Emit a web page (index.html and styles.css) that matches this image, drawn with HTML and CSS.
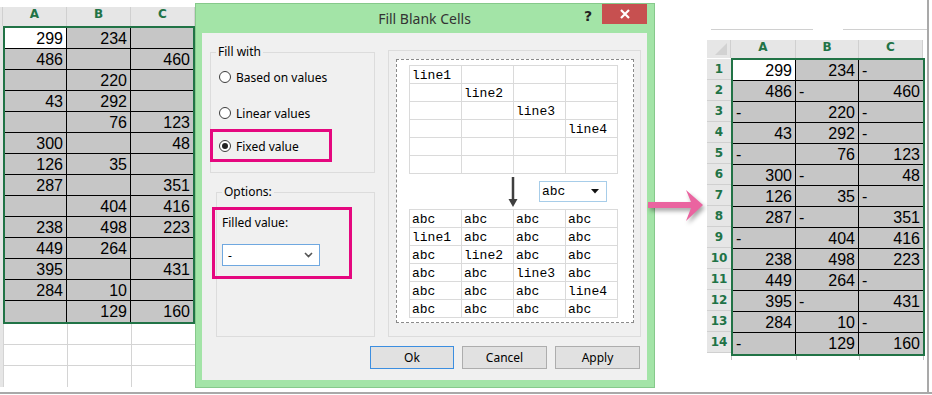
FILE: index.html
```html
<!DOCTYPE html>
<html lang="en">
<head>
    <meta charset="UTF-8">
    <title>Fill Blank Cells</title>
    <link rel="stylesheet" href="styles.css">
</head>
<body>
    <div class="page">
        <!-- source sheet -->
        <div class="sheet-left">
            <div class="xl-head l-head">
                <div class="ch"></div><div class="ch">A</div><div class="ch">B</div><div class="ch">C</div>
            </div>
            <div class="l-body">
                <div class="slice"></div>
                <div class="sel l-sel" id="leftSel"></div>
            </div>
            <div class="l-empty">
                <div class="slice"></div>
                <div class="empty-grid">
                    <span></span><span></span><span></span>
                    <span></span><span></span><span></span>
                    <span></span><span></span><span></span>
                </div>
            </div>
        </div>

        <!-- dialog -->
        <div class="dialog">
            <div class="titlebar">
                <div class="tb-side"></div>
                <div class="title">Fill Blank Cells</div>
                <div class="tb-side">
                    <span class="help">?</span>
                    <span class="close">
                        <svg width="12" height="12" viewBox="0 0 12 12"><path d="M2 2 L10 10 M10 2 L2 10" stroke="#fff" stroke-width="2.2"/></svg>
                    </span>
                </div>
            </div>
            <div class="dlg-body">
                <div class="dlg-main">
                    <div class="dlg-left">
                        <fieldset class="group fill-with">
                            <legend>Fill with</legend>
                            <div class="radio-row"><span class="radio"></span>Based on values</div>
                            <div class="radio-row"><span class="radio"></span>Linear values</div>
                            <div class="hl hl-radio">
                                <div class="radio-row"><span class="radio on"></span>Fixed value</div>
                            </div>
                        </fieldset>
                        <fieldset class="group options">
                            <legend>Options:</legend>
                            <div class="hl hl-value">
                                <div class="lbl">Filled value:</div>
                                <div class="combo">
                                    <span>-</span>
                                    <svg width="9" height="6" viewBox="0 0 9 6"><path d="M1 1 L4.5 4.5 L8 1" fill="none" stroke="#555" stroke-width="1.6"/></svg>
                                </div>
                            </div>
                        </fieldset>
                    </div>
                    <div class="preview">
                        <div class="preview-inner">
                            <div class="pgrid" id="gridBefore"></div>
                            <div class="arrow-row">
                                <svg width="10" height="35" viewBox="0 0 10 35"><line x1="5" y1="3" x2="5" y2="27" stroke="#3f3f3f" stroke-width="2.5"/><path d="M0.5 25 L9.5 25 L5 33 Z" fill="#3f3f3f"/></svg>
                                <div class="mini-combo">
                                    <span>abc</span>
                                    <svg width="8" height="5" viewBox="0 0 8 5"><path d="M0 0 H8 L4 4.5 Z" fill="#111"/></svg>
                                </div>
                            </div>
                            <div class="pgrid" id="gridAfter"></div>
                        </div>
                    </div>
                </div>
                <div class="buttons">
                    <button class="btn ok">Ok</button>
                    <button class="btn">Cancel</button>
                    <button class="btn">Apply</button>
                </div>
            </div>
        </div>

        <div class="gap"></div>

        <!-- result sheet -->
        <div class="sheet-right">
            <div class="fx-line"><span class="seg1"></span><span class="seg2"></span></div>
            <div class="xl-head r-head">
                <div class="corner">
                    <svg width="12" height="12" viewBox="0 0 12 12"><path d="M12 0 V12 H0 Z" fill="#d2d2d2"/></svg>
                </div>
                <div class="ch">A</div><div class="ch">B</div><div class="ch">C</div>
            </div>
            <div class="r-body">
                <div class="row-nums" id="rowNums"></div>
                <div class="sel r-sel" id="rightSel"></div>
            </div>
            <div class="ticks"><span></span><span></span><span></span><span></span></div>
        </div>

        <svg class="pink-arrow" width="64" height="40" viewBox="0 0 64 40">
            <path d="M2 14 H45 L40 2 L57 17 L40 33 L45 20 H2 Z" fill="#ea64a0"/>
        </svg>
    </div>

    <script>
        const data = [
            [299, 234, null], [486, null, 460], [null, 220, null], [43, 292, null],
            [null, 76, 123], [300, null, 48], [126, 35, null], [287, null, 351],
            [null, 404, 416], [238, 498, 223], [449, 264, null], [395, null, 431],
            [284, 10, null], [null, 129, 160]
        ];

        function fillSheet(el, blank) {
            data.forEach((row, r) => {
                row.forEach((v, c) => {
                    const cell = document.createElement('div');
                    cell.className = 'c';
                    if (r === 0 && c === 0) cell.classList.add('white');
                    if (v === null) {
                        cell.textContent = blank;
                        cell.classList.add('dash');
                    } else {
                        cell.textContent = v;
                    }
                    el.appendChild(cell);
                });
            });
        }

        fillSheet(document.getElementById('leftSel'), '');
        fillSheet(document.getElementById('rightSel'), '-');

        const nums = document.getElementById('rowNums');
        for (let i = 1; i <= 14; i++) {
            const n = document.createElement('div');
            n.textContent = i;
            nums.appendChild(n);
        }

        // preview tables in the dialog
        function fillGrid(el, cellFn) {
            for (let r = 0; r < 6; r++) {
                for (let c = 0; c < 4; c++) {
                    const s = document.createElement('span');
                    s.textContent = cellFn(r, c);
                    el.appendChild(s);
                }
            }
        }
        fillGrid(document.getElementById('gridBefore'), (r, c) => r === c ? 'line' + (r + 1) : '');
        fillGrid(document.getElementById('gridAfter'), (r, c) => (r - 1 === c) ? 'line' + r : 'abc');
    </script>
</body>
</html>
```

FILE: styles.css
```css
body {
    margin: 0;
    background: #fff;
    font-family: "Noto Sans", sans-serif;
}
.page {
    position: relative;
    display: flex;
    width: 932px;
    height: 392px;
    border-bottom: 2px solid #a9a9a9;
    overflow: hidden;
}

/* excel bits */
.xl-head {
    display: grid;
    background: #e6e6e6;
}
.xl-head .ch {
    color: #217346;
    font: bold 12px "DejaVu Sans", sans-serif;
    text-align: center;
    border-right: 1px solid #d0d0d0;
}
.sel {
    display: grid;
    grid-auto-rows: 21px;
    border: 2px solid #217346;
}
.sel .c {
    background: #c6c6c6;
    border-right: 1px solid #000;
    border-bottom: 1px solid #000;
    font: 16px "Liberation Sans", Arial, sans-serif;
    line-height: 21px;
    text-align: right;
    padding: 0 3px;
    color: #000;
}
.sel .c:nth-child(3n) {
    border-right: none;
}
.sel .c:nth-last-child(-n+3) {
    border-bottom: none;
}
.sel .c.white {
    background: #fff;
}
.sel .c.dash {
    text-align: left;
}

.sheet-left {
    flex: none;
    width: 195px;
    padding-top: 7px;
}
.l-head {
    grid-template-columns: 3px 64px 64px 64px;
    height: 19px;
    line-height: 19px;
}
.l-body {
    display: flex;
}
.slice {
    width: 3px;
    background: #e6e6e6;
}
.l-sel {
    width: 192px;
    box-sizing: border-box;
    grid-template-columns: 62px 64px 62px;
}
.l-empty {
    display: flex;
}
.empty-grid {
    display: grid;
    grid-template-columns: 64px 64px 64px;
    grid-auto-rows: 21px;
}
.empty-grid span {
    border-left: 1px solid #d4d4d4;
    border-bottom: 1px solid #d4d4d4;
}
.empty-grid span:nth-last-child(-n+3) {
    border-bottom: none;
}

/* dialog */
.dialog {
    flex: none;
    width: 460px;
    height: 385px;
    margin-top: 3px;
    box-sizing: border-box;
    background: #a3e4a7;
    border: 1px solid #86c98b;
    padding: 0 7px 7px 6px;
    display: flex;
    flex-direction: column;
}
.titlebar {
    display: flex;
    height: 29px;
}
.tb-side {
    width: 64px;
    display: flex;
    justify-content: flex-end;
    align-items: flex-start;
}
.title {
    flex: 1;
    text-align: center;
    font-size: 14px;
    line-height: 29px;
    color: #333;
}
.help {
    font: bold 14px "DejaVu Sans", sans-serif;
    color: #222;
    margin: 4px 10px 0 0;
    line-height: 16px;
}
.close {
    width: 45px;
    height: 20px;
    background: #c75050;
    display: flex;
    align-items: center;
    justify-content: center;
}
.dlg-body {
    flex: 1;
    background: #f0f0f0;
}
.dlg-main {
    display: flex;
    align-items: flex-start;
    gap: 13px;
    padding-left: 8px;
}
.dlg-left {
    width: 165px;
}
.group {
    margin: 0;
    border: 1px solid #dcdcdc;
    padding: 7px 8px 10px 8px;
    min-width: 0;
    box-sizing: border-box;
}
.group legend {
    padding: 0 2px;
    margin-left: -3px;
    font-size: 12px;
    line-height: 16px;
}
.fill-with {
    width: 165px;
    margin-top: 11px;
}
.options {
    width: 159px;
    margin: 11px 0 0 6px;
    padding-bottom: 57px;
}
.radio-row {
    display: flex;
    align-items: center;
    gap: 5px;
    height: 20px;
    font-size: 12px;
}
.radio-row + .radio-row {
    margin-top: 16px;
}
.radio {
    width: 12px;
    height: 12px;
    box-sizing: border-box;
    border: 1px solid #3c3c3c;
    border-radius: 50%;
    background: #fff;
    display: flex;
    align-items: center;
    justify-content: center;
}
.radio.on::after {
    content: "";
    width: 6px;
    height: 6px;
    border-radius: 50%;
    background: #222;
}
.hl {
    border: 3px solid #e5077f;
    box-sizing: border-box;
}
.hl-radio {
    width: 122px;
    margin: 6px 0 0 -9px;
    padding: 4px 0 3px 6px;
}
.hl-value {
    width: 140px;
    margin-left: -13px;
    padding: 5px 0 10px 7px;
}
.lbl {
    font-size: 12px;
    line-height: 16px;
}
.combo {
    margin-top: 13px;
    width: 98px;
    height: 22px;
    box-sizing: border-box;
    border: 1px solid #6fa8e0;
    background: #fff;
    display: flex;
    align-items: center;
    justify-content: space-between;
    padding: 0 6px 0 5px;
    font-size: 12px;
}

/* preview */
.preview {
    margin-top: 17px;
    width: 253px;
    height: 287px;
    box-sizing: border-box;
    border: 1px solid #dcdcdc;
    padding: 8px 6px 13px 7px;
    display: flex;
}
.preview-inner {
    flex: 1;
    background: #fff;
    border: 1px dashed #8a8a8a;
    padding: 5px 0 0 12px;
}
.pgrid {
    display: grid;
    grid-template-columns: repeat(4, 52px);
    grid-auto-rows: 18px;
    width: max-content;
    border-left: 1px solid #dadada;
    border-top: 1px solid #dadada;
}
.pgrid span {
    border-right: 1px solid #dadada;
    border-bottom: 1px solid #dadada;
    font: 13px "Liberation Mono", monospace;
    line-height: 19px;
    padding-left: 2px;
    color: #000;
}
.arrow-row {
    display: flex;
    align-items: flex-start;
    height: 35px;
    padding-left: 99px;
}
.mini-combo {
    margin: 7px 0 0 21px;
    width: 68px;
    height: 21px;
    box-sizing: border-box;
    border: 1px solid #a7cde9;
    background: #fff;
    display: flex;
    align-items: center;
    justify-content: space-between;
    padding: 0 7px 0 2px;
    font: 13px "Liberation Mono", monospace;
}
.buttons {
    display: flex;
    justify-content: flex-end;
    gap: 8px;
    padding-right: 7px;
    margin-top: 9px;
}
.btn {
    width: 85px;
    height: 23px;
    box-sizing: border-box;
    border: 1px solid #adadad;
    background: #e1e1e1;
    font: 12px "Noto Sans", sans-serif;
    color: #000;
    padding: 0;
}
.btn.ok {
    width: 84px;
    border-color: #3c8ee0;
}

.gap {
    flex: none;
    width: 45px;
}

/* result sheet */
.sheet-right {
    flex: none;
    width: 229px;
    padding-left: 7px;
    box-sizing: border-box;
    border-right: 2px solid #a9a9a9;
}
.fx-line {
    display: flex;
    margin-top: 29px;
    height: 1px;
}
.fx-line .seg1 {
    margin-left: 4px;
    width: 102px;
    background: #d0d0d0;
}
.fx-line .seg2 {
    margin-left: 30px;
    flex: 1;
    background: #d0d0d0;
}
.r-head {
    margin-top: 10px;
    grid-template-columns: 24px 65px 63px 64px;
    height: 18px;
    line-height: 18px;
    width: max-content;
}
.corner {
    display: flex;
    align-items: flex-end;
    justify-content: flex-end;
    padding: 0 3px 3px 0;
    border-right: 1px solid #d0d0d0;
}
.r-body {
    display: flex;
}
.row-nums {
    width: 24px;
    margin-top: 1px;
}
.row-nums div {
    height: 21px;
    box-sizing: border-box;
    background: #e6e6e6;
    border-bottom: 1px solid #d0d0d0;
    color: #217346;
    font: bold 12px "DejaVu Sans", sans-serif;
    line-height: 21px;
    text-align: center;
}
.r-sel {
    width: 194px;
    box-sizing: border-box;
    grid-template-columns: 63px 63px 64px;
}
.ticks {
    display: grid;
    grid-template-columns: 65px 63px 64px 2px;
    margin-left: 24px;
    height: 4px;
}
.ticks span {
    border-left: 1px solid #c4c4c4;
}

.pink-arrow {
    position: absolute;
    left: 646px;
    top: 188px;
    filter: drop-shadow(2px 3px 2px rgba(0, 0, 0, 0.35));
}
```
